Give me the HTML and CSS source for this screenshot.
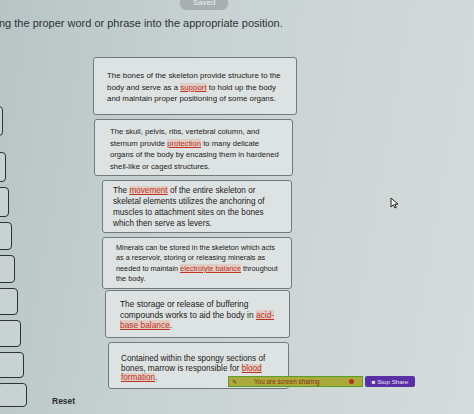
FILE: index.html
```html
<!DOCTYPE html>
<html lang="en">
<head>
    <meta charset="UTF-8">
    <meta name="viewport" content="width=device-width, initial-scale=1.0">
    <title>Skeleton Functions</title>
    <link rel="stylesheet" href="styles.css">
</head>
<body>
    <div class="top">
        <span class="saved">Saved</span>
    </div>
    <p class="prompt">ng the proper word or phrase into the appropriate position.</p>
    <div class="work">
        <div class="slots">
            <div class="slot"></div>
            <div class="slot"></div>
            <div class="slot"></div>
            <div class="slot"></div>
            <div class="slot"></div>
            <div class="slot"></div>
            <div class="slot"></div>
            <div class="slot"></div>
            <div class="slot"></div>
        </div>
        <div class="main">
            <div class="cards">
                <div class="card">The bones of the skeleton provide structure to the<br>body and serve as a <span class="term">support</span> to hold up the body<br>and maintain proper positioning of some organs.</div>
                <div class="card">The skull, pelvis, ribs, vertebral column, and<br>sternum provide <span class="term">protection</span> to many delicate<br>organs of the body by encasing them in hardened<br>shell-like or caged structures.</div>
                <div class="card">The <span class="term">movement</span> of the entire skeleton or<br>skeletal elements utilizes the anchoring of<br>muscles to attachment sites on the bones<br>which then serve as levers.</div>
                <div class="card">Minerals can be stored in the skeleton which acts<br>as a reservoir, storing or releasing minerals as<br>needed to maintain <span class="term">electrolyte balance</span> throughout<br>the body.</div>
                <div class="card">The storage or release of buffering<br>compounds works to aid the body in <span class="term">acid-<br>base balance</span>.</div>
                <div class="card">Contained within the spongy sections of<br>bones, marrow is responsible for <span class="term">blood<br>formation</span>.</div>
            </div>
            <button class="reset">Reset</button>
        </div>
    </div>

    <div class="share">
        <span class="share_icon">&#9998;</span>
        <span class="share_text">You are screen sharing</span>
        <span class="share_dot"></span>
    </div>
    <button class="stop">&#9632; Stop Share</button>

    <svg class="cursor" width="9" height="12" viewBox="0 0 9 12">
        <path d="M1 1 L1 10 L3.3 7.8 L5 11 L6.4 10.3 L4.8 7.2 L8 7.2 Z" fill="#f4f4f4" stroke="#222" stroke-width="1"/>
    </svg>
</body>
</html>
```

FILE: styles.css
```css
body {
    margin: 0;
    width: 474px;
    height: 414px;
    overflow: hidden;
    position: relative;
    background: linear-gradient(100deg, #b7c4c5 0%, #c8d2d2 40%, #d5dcdb 100%);
    font-family: "Liberation Sans", Arial, sans-serif;
    color: #222;
}
.top {
    height: 10px;
}
.saved {
    display: block;
    margin-left: 180px;
    width: 48px;
    height: 10px;
    background-color: #a7afb1;
    border-radius: 0 0 6px 6px;
    color: #eef0f0;
    font-size: 8px;
    line-height: 6px;
    text-align: center;
    overflow: hidden;
}
.prompt {
    margin: 6px 0 0 -1px;
    font-size: 11px;
    line-height: 14px;
    color: #2e3333;
}
.work {
    display: flex;
    margin-top: 27px;
}
.slots {
    width: 27px;
    display: flex;
    flex-direction: column;
    gap: 5px;
    padding-top: 49px;
}
.slot {
    width: 30px;
    height: 28px;
    box-sizing: border-box;
    border: 1.5px solid #2c3131;
    border-radius: 4px;
    background-color: #c9d2d3;
}
.slot:nth-child(1) { margin-left: -27px; height: 30px; margin-bottom: 11px; }
.slot:nth-child(2) { margin-left: -24px; height: 30px; }
.slot:nth-child(3) { margin-left: -21px; height: 30px; }
.slot:nth-child(4) { margin-left: -18px; }
.slot:nth-child(5) { margin-left: -15px; }
.slot:nth-child(6) { margin-left: -12px; height: 27px; }
.slot:nth-child(7) { margin-left: -9px; height: 27px; }
.slot:nth-child(8) { margin-left: -6px; height: 26px; }
.slot:nth-child(9) { margin-left: -3px; height: 24px; }

.main {
    margin-left: 66px;
    display: flex;
    flex-direction: column;
    align-items: flex-start;
}
.cards {
    display: flex;
    flex-direction: column;
}
.card {
    box-sizing: border-box;
    border: 1px solid #737a7a;
    border-radius: 3px;
    background-color: #dde3e2;
    color: #1e2020;
    white-space: nowrap;
}
.card:nth-child(1) { width: 204px; height: 58px; padding: 12px 0 0 13px; font-size: 7.9px; line-height: 11.5px; }
.card:nth-child(2) { width: 199px; height: 57px; margin: 4px 0 0 1px; padding: 6px 0 0 15px; font-size: 7.7px; line-height: 11.6px; }
.card:nth-child(3) { width: 190px; height: 53px; margin: 4px 0 0 9px; padding: 4px 0 0 10px; font-size: 8.2px; line-height: 11px; }
.card:nth-child(4) { width: 190px; height: 52px; margin: 4px 0 0 9px; padding: 5px 0 0 13px; font-size: 7.3px; line-height: 10.4px; }
.card:nth-child(5) { width: 185px; height: 48px; margin: 1px 0 0 12px; padding: 8px 0 0 14px; font-size: 8.4px; line-height: 10.5px; }
.card:nth-child(6) { width: 181px; height: 47px; margin: 4px 0 0 15px; padding: 11px 0 0 12px; font-size: 8.2px; line-height: 9.6px; }
.term {
    color: #c0341f;
    text-decoration: underline;
    background-color: rgba(232, 160, 140, 0.35);
}
.reset {
    margin: 7px 0 0 -41px;
    padding: 0;
    border: none;
    background: none;
    font-family: "Liberation Sans", Arial, sans-serif;
    font-size: 8.5px;
    font-weight: bold;
    line-height: 10px;
    color: #2b2e2e;
}

.share {
    position: absolute;
    left: 228px;
    top: 376px;
    width: 135px;
    height: 11px;
    box-sizing: border-box;
    border: 1.5px solid #5a9e2c;
    background-color: #a9aa3a;
    display: flex;
    align-items: center;
}
.share_icon {
    font-size: 6px;
    color: #6a3a1a;
    margin-left: 3px;
    width: 22px;
}
.share_text {
    font-size: 6.4px;
    color: #8c2c18;
    width: 95px;
}
.share_dot {
    width: 5px;
    height: 5px;
    border-radius: 50%;
    background-color: #b8321c;
}
.stop {
    position: absolute;
    left: 365px;
    top: 376px;
    width: 50px;
    height: 11px;
    padding: 0;
    border: none;
    border-radius: 2px;
    background-color: #5a2fa6;
    color: #e8e2f4;
    font-family: "Liberation Sans", Arial, sans-serif;
    font-size: 6.2px;
    line-height: 11px;
}
.cursor {
    position: absolute;
    left: 390px;
    top: 197px;
}
```
